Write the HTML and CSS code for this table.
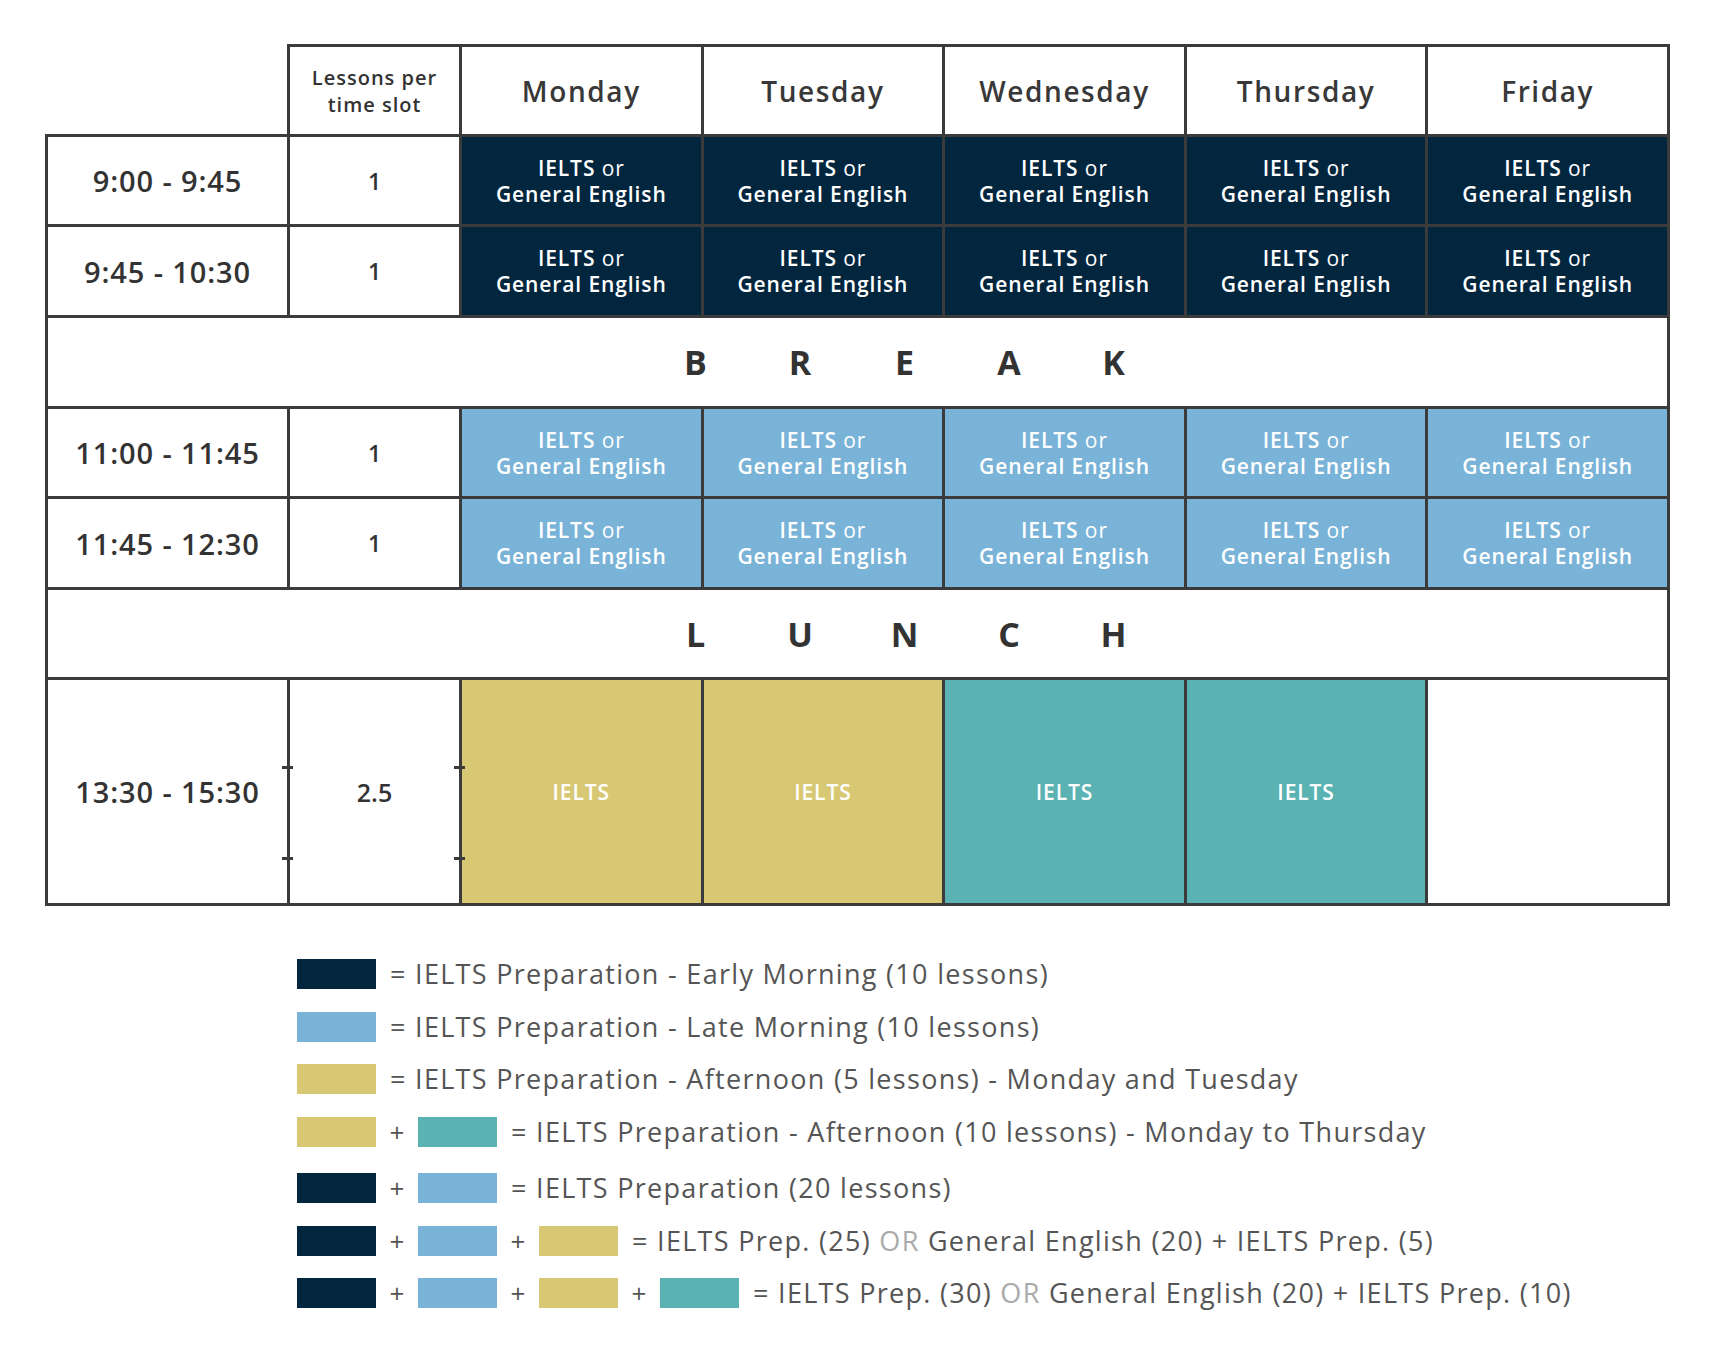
FILE: index.html
```html
<!DOCTYPE html>
<html lang="en">
<head>
<meta charset="utf-8">
<title>IELTS timetable</title>
<link rel="stylesheet" href="styles.css">
</head>
<body>
<main class="page">
  <table class="schedule">
    <colgroup>
      <col class="c-time">
      <col class="c-lessons">
      <col class="c-day"><col class="c-day"><col class="c-day"><col class="c-day"><col class="c-day">
    </colgroup>
    <thead>
      <tr class="h90">
        <th class="corner"></th>
        <th class="lessons-head">Lessons per<br>time slot</th>
        <th class="day">Monday</th>
        <th class="day">Tuesday</th>
        <th class="day">Wednesday</th>
        <th class="day">Thursday</th>
        <th class="day">Friday</th>
      </tr>
    </thead>
    <tbody>
      <tr class="h90">
        <th class="time">9:00 - 9:45</th>
        <td class="num">1</td>
        <td class="slot navy"><b>IELTS</b> or<br><b>General English</b></td>
        <td class="slot navy"><b>IELTS</b> or<br><b>General English</b></td>
        <td class="slot navy"><b>IELTS</b> or<br><b>General English</b></td>
        <td class="slot navy"><b>IELTS</b> or<br><b>General English</b></td>
        <td class="slot navy"><b>IELTS</b> or<br><b>General English</b></td>
      </tr>
      <tr class="h91">
        <th class="time">9:45 - 10:30</th>
        <td class="num">1</td>
        <td class="slot navy"><b>IELTS</b> or<br><b>General English</b></td>
        <td class="slot navy"><b>IELTS</b> or<br><b>General English</b></td>
        <td class="slot navy"><b>IELTS</b> or<br><b>General English</b></td>
        <td class="slot navy"><b>IELTS</b> or<br><b>General English</b></td>
        <td class="slot navy"><b>IELTS</b> or<br><b>General English</b></td>
      </tr>
      <tr class="h91">
        <td class="pause" colspan="7">
          <div class="letters"><span>B</span><span>R</span><span>E</span><span>A</span><span>K</span></div>
        </td>
      </tr>
      <tr class="h90">
        <th class="time">11:00 - 11:45</th>
        <td class="num">1</td>
        <td class="slot sky"><b>IELTS</b> or<br><b>General English</b></td>
        <td class="slot sky"><b>IELTS</b> or<br><b>General English</b></td>
        <td class="slot sky"><b>IELTS</b> or<br><b>General English</b></td>
        <td class="slot sky"><b>IELTS</b> or<br><b>General English</b></td>
        <td class="slot sky"><b>IELTS</b> or<br><b>General English</b></td>
      </tr>
      <tr class="h91">
        <th class="time">11:45 - 12:30</th>
        <td class="num">1</td>
        <td class="slot sky"><b>IELTS</b> or<br><b>General English</b></td>
        <td class="slot sky"><b>IELTS</b> or<br><b>General English</b></td>
        <td class="slot sky"><b>IELTS</b> or<br><b>General English</b></td>
        <td class="slot sky"><b>IELTS</b> or<br><b>General English</b></td>
        <td class="slot sky"><b>IELTS</b> or<br><b>General English</b></td>
      </tr>
      <tr class="h90">
        <td class="pause" colspan="7">
          <div class="letters"><span>L</span><span>U</span><span>N</span><span>C</span><span>H</span></div>
        </td>
      </tr>
      <tr class="h226">
        <th class="time">13:30 - 15:30</th>
        <td class="num big ticked">2.5</td>
        <td class="slot gold ticked"><b>IELTS</b></td>
        <td class="slot gold"><b>IELTS</b></td>
        <td class="slot teal"><b>IELTS</b></td>
        <td class="slot teal"><b>IELTS</b></td>
        <td class="slot blank"></td>
      </tr>
    </tbody>
  </table>

  <ul class="legend">
    <li class="row">
      <span class="sw navy"></span>
      <span class="txt">= IELTS Preparation - Early Morning (10 lessons)</span>
    </li>
    <li class="row">
      <span class="sw sky"></span>
      <span class="txt">= IELTS Preparation - Late Morning (10 lessons)</span>
    </li>
    <li class="row">
      <span class="sw gold"></span>
      <span class="txt">= IELTS Preparation - Afternoon (5 lessons) - Monday and Tuesday</span>
    </li>
    <li class="row wide">
      <span class="sw gold"></span><span class="plus">+</span><span class="sw teal"></span>
      <span class="txt">= IELTS Preparation - Afternoon (10 lessons) - Monday to Thursday</span>
    </li>
    <li class="row">
      <span class="sw navy"></span><span class="plus">+</span><span class="sw sky"></span>
      <span class="txt">= IELTS Preparation (20 lessons)</span>
    </li>
    <li class="row">
      <span class="sw navy"></span><span class="plus">+</span><span class="sw sky"></span><span class="plus">+</span><span class="sw gold"></span>
      <span class="txt">= IELTS Prep. (25) <span class="or">OR</span> General English (20) + IELTS Prep. (5)</span>
    </li>
    <li class="row">
      <span class="sw navy"></span><span class="plus">+</span><span class="sw sky"></span><span class="plus">+</span><span class="sw gold"></span><span class="plus">+</span><span class="sw teal"></span>
      <span class="txt">= IELTS Prep. (30) <span class="or">OR</span> General English (20) + IELTS Prep. (10)</span>
    </li>
  </ul>
</main>
</body>
</html>
```

FILE: styles.css
```css
* { box-sizing: border-box; }

html, body {
  margin: 0;
  background: #ffffff;
}

body {
  font-family: "Open Sans", "Noto Sans", sans-serif;
  color: #3a3a3a;
}

.page {
  width: 1720px;
  min-height: 1367px;
  padding: 44px 0 0 45px;
}

/* ---------- timetable ---------- */
.schedule {
  border-collapse: collapse;
  table-layout: fixed;
  width: 1622px;
}

.c-time { width: 242px; }
.c-lessons { width: 172px; }
.c-day { width: 241.6px; }

.schedule th,
.schedule td {
  border: 3px solid #3b3b3b;
  padding: 0;
  text-align: center;
  vertical-align: middle;
}

.h90 { height: 90px; }
.h91 { height: 91px; }
.h226 { height: 226px; }

.schedule .corner {
  border-top: none;
  border-left: none;
}

.lessons-head {
  font-size: 20px;
  font-weight: 600;
  line-height: 27px;
  letter-spacing: 1px;
  color: #333;
}

.day {
  font-size: 28px;
  font-weight: 600;
  letter-spacing: 1.6px;
  color: #383838;
}

.time {
  font-size: 29px;
  font-weight: 600;
  letter-spacing: 0.9px;
  color: #333;
}

.num {
  font-size: 23px;
  font-weight: 600;
  color: #333;
}

.num.big { font-size: 25px; }

.slot {
  color: #ffffff;
  font-size: 21px;
  line-height: 26px;
  font-weight: 400;
  letter-spacing: 0.9px;
}

.slot b { font-weight: 600; }

.navy { background: #03263f; }
.sky  { background: #79b3d8; }
.gold { background: #d8c874; }
.teal { background: #5bb2b2; }
.blank { background: #ffffff; }

/* break / lunch rows */
.pause { background: #ffffff; }

.letters {
  display: flex;
  justify-content: center;
  padding-left: 94px;
  font-size: 34px;
  font-weight: 700;
  color: #333;
}

.letters span {
  width: 104.5px;
  text-align: center;
}

/* small tick marks on the merged afternoon row */
.ticked { position: relative; }

.ticked::before,
.ticked::after {
  content: "";
  position: absolute;
  left: -8px;
  width: 11px;
  height: 3px;
  background: #3b3b3b;
}

.ticked::before { top: 86px; }
.ticked::after { top: 177px; }

/* ---------- legend ---------- */
.legend {
  list-style: none;
  margin: 53px 0 0 252px;
  padding: 0;
}

.row {
  display: flex;
  align-items: center;
  height: 30px;
  margin-bottom: 22.7px;
}

.row.wide { margin-bottom: 26px; }

.sw {
  display: block;
  width: 79px;
  height: 30px;
  flex: none;
}

.plus {
  width: 42px;
  text-align: center;
  font-size: 26px;
  color: #555;
  line-height: 30px;
}

.txt {
  margin-left: 14px;
  font-size: 27px;
  line-height: 30px;
  letter-spacing: 1.3px;
  color: #555;
  white-space: nowrap;
}

.or { color: #aaaaaa; }
```
